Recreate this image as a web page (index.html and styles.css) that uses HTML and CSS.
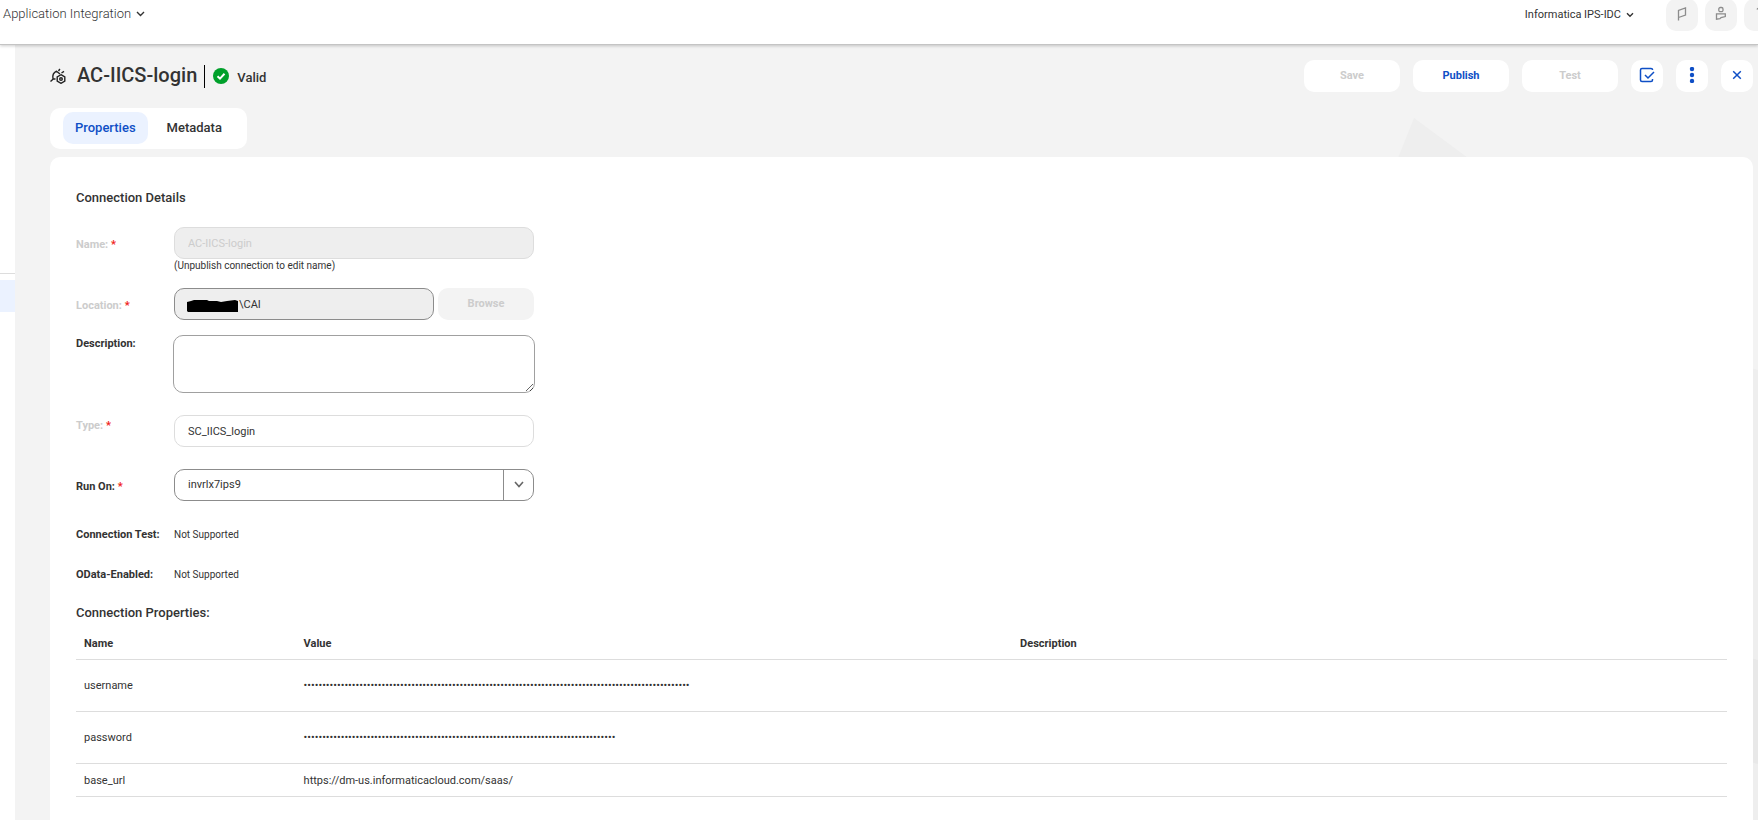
FILE: index.html
```html
<!DOCTYPE html>
<html lang="en">
<head>
    <meta charset="UTF-8">
    <title>AC-IICS-login</title>
    <link rel="stylesheet" href="styles.css">
</head>
<body>
    <header class="top-bar">
        <button class="menu-btn service-menu">Application Integration
            <svg width="9" height="6" viewBox="0 0 9 6"><path d="M1 1l3.500 3.500L8 1"/></svg>
        </button>
        <div class="top-right">
            <button class="menu-btn org-menu">Informatica IPS-IDC
                <svg width="8" height="6" viewBox="0 0 8 6"><path d="M1 1.2l3 3 3-3"/></svg>
            </button>
            <button class="round-btn" aria-label="Notifications">
                <svg width="16" height="16" viewBox="0 0 16 16"><path d="M4.500 14.500v-10l7-2.500v7l-7 2.500"/></svg>
            </button>
            <button class="round-btn" aria-label="User">
                <svg width="16" height="16" viewBox="0 0 16 16"><rect x="5.800" y="1.500" width="4.200" height="4.200" rx="1.500"/><path d="M3.500 7.800h8.800v2.800l-4.300 1-1 1-3.500.6z"/></svg>
            </button>
            <button class="round-btn" aria-label="Help">
                <svg width="16" height="16" viewBox="0 0 16 16"><path d="M5 3.500c1-2 6-2 6 1 0 2-3 2.500-3 5M8 12v1.500"/></svg>
            </button>
        </div>
    </header>

    <div class="layout">
        <nav class="side-nav">
            <div class="nav-active"></div>
        </nav>

        <main class="content">
            <svg class="backdrop" width="344" height="776" viewBox="0 0 344 776">
                <path d="M0 73l-16 40h70z"/>
                <path d="M344 325l-30-8v480h30z"/>
                <path class="dark" d="M344 615l-30-8v104l30 8z"/>
            </svg>

            <div class="title-row">
                <svg class="conn-icon" width="16" height="16" viewBox="0 0 16 16">
                    <path d="M.5 13.500l3-2.700M3 11c-.6-3 .2-6.300 3.500-7.800l3.500 2.800M3 11h2.500M8.500 3l1.400-2M11.500 5l2.500-1.600"/>
                    <path d="M11 6.700l3.800 2.100v4.400L11 15.300l-3.800-2.100V8.800z"/>
                    <circle cx="11" cy="11" r="1.300"/>
                </svg>
                <h1>AC-IICS-login</h1>
                <span class="divider"></span>
                <svg class="valid-icon" width="16" height="16" viewBox="0 0 16 16">
                    <circle cx="8" cy="8" r="8"/>
                    <path d="M4.500 8.200l2.500 2.400 4.500-4.800"/>
                </svg>
                <span class="status">Valid</span>
                <div class="actions">
                    <button class="btn" disabled>Save</button>
                    <button class="btn">Publish</button>
                    <button class="btn" disabled>Test</button>
                    <button class="icon-btn" aria-label="Validation">
                        <svg width="16" height="16" viewBox="0 0 16 16"><path d="M13.500 3V2.500Q13.500 1.500 12 1.500H3Q1.500 1.500 1.500 3v10q0 1.500 1.500 1.500h9q1.500 0 1.500-1.500v-1M6 8l3 3 6-6"/></svg>
                    </button>
                    <button class="icon-btn" aria-label="More actions">
                        <svg class="dots" width="16" height="16" viewBox="0 0 16 16"><circle cx="8" cy="2" r="2.200"/><circle cx="8" cy="8" r="2.200"/><circle cx="8" cy="14" r="2.200"/></svg>
                    </button>
                    <button class="icon-btn" aria-label="Close">
                        <svg width="16" height="16" viewBox="0 0 16 16"><path d="M4.200 4.200l7.600 7.600M11.800 4.200l-7.600 7.600"/></svg>
                    </button>
                </div>
            </div>

            <div class="tabs" role="tablist">
                <button class="tab active" role="tab" aria-selected="true">Properties</button>
                <button class="tab" role="tab" aria-selected="false">Metadata</button>
            </div>

            <section class="card">
                <h2>Connection Details</h2>
                <form class="details">
                    <div class="form-row">
                        <label class="muted" for="name">Name: <span class="req">*</span></label>
                        <div class="field">
                            <input type="text" id="name" value="AC-IICS-login" disabled>
                            <p class="hint">(Unpublish connection to edit name)</p>
                        </div>
                    </div>
                    <div class="form-row">
                        <label class="muted" for="location">Location: <span class="req">*</span></label>
                        <div class="field location">
                            <input type="text" id="location" value="\CAI" readonly>
                            <svg class="redacted" width="51" height="12" viewBox="0 0 51 12"><path d="M0 2l4-1 3-1h13l2 1h8l4 1 6-1 8-1 3 1v11H21l-5 1H2L0 11z"/></svg>
                            <button type="button" class="browse" disabled>Browse</button>
                        </div>
                    </div>
                    <div class="form-row top">
                        <label for="description">Description:</label>
                        <div class="field"><textarea id="description"></textarea></div>
                    </div>
                    <div class="form-row top">
                        <label class="muted type-label" for="type">Type: <span class="req">*</span></label>
                        <div class="field"><input type="text" id="type" class="light" value="SC_IICS_login" readonly></div>
                    </div>
                    <div class="form-row">
                        <label for="runOn">Run On: <span class="req">*</span></label>
                        <div class="field select">
                            <select id="runOn"><option>invrlx7ips9</option></select>
                            <span class="arrow"><svg width="10" height="7" viewBox="0 0 10 7"><path d="M1 1l4 4.500L9 1"/></svg></span>
                        </div>
                    </div>
                    <dl class="status-list">
                        <div class="status-row"><dt>Connection Test:</dt><dd>Not Supported</dd></div>
                        <div class="status-row"><dt>OData-Enabled:</dt><dd>Not Supported</dd></div>
                    </dl>
                </form>

                <h2>Connection Properties:</h2>
                <table class="props">
                    <thead>
                        <tr><th class="col-name">Name</th><th class="col-value">Value</th><th>Description</th></tr>
                    </thead>
                    <tbody>
                        <tr class="secret"><td>username</td><td>••••••••••••••••••••••••••••••••••••••••••••••••••••••••••••••••••••••••••••••••••••••••••••••••••••••••</td><td></td></tr>
                        <tr class="secret"><td>password</td><td>••••••••••••••••••••••••••••••••••••••••••••••••••••••••••••••••••••••••••••••••••••</td><td></td></tr>
                        <tr><td>base_url</td><td>https://dm-us.informaticacloud.com/saas/</td><td></td></tr>
                    </tbody>
                </table>
            </section>
        </main>
    </div>
</body>
</html>
```

FILE: styles.css
```css
* {
    margin: 0;
    padding: 0;
    box-sizing: border-box;
}

body {
    font-family: Roboto, 'Liberation Sans', sans-serif;
    font-size: 11px;
    line-height: 16px;
    color: #333;
    background: #fff;
    display: flex;
    flex-direction: column;
    min-height: 100vh;
}

button, input, select, textarea {
    font: inherit;
    color: inherit;
}

button {
    border: none;
    cursor: pointer;
}

svg {
    fill: none;
    stroke: currentColor;
    flex: none;
}

/* Top bar */
.top-bar {
    display: flex;
    flex: none;
    justify-content: space-between;
    height: 45px;
    padding-left: 3px;
    border-bottom: 1px solid #c4c4c4;
    box-shadow: 0 1px 3px rgba(0, 0, 0, 0.2);
    overflow: hidden;
    position: relative;
    z-index: 1;
}

.menu-btn {
    display: flex;
    align-items: center;
    gap: 5px;
    height: 28px;
    background: none;
}

.menu-btn svg {
    stroke-width: 1.4;
}

.service-menu {
    font-size: 13px;
    font-weight: 300;
}

.top-right {
    display: flex;
    gap: 7px;
    margin-top: -1px;
    margin-right: -18px;
}

.org-menu {
    height: 32px;
    margin-right: 25px;
}

.round-btn {
    width: 32px;
    height: 32px;
    border-radius: 10px;
    background: #f3f3f3;
    color: #8c8c8c;
}

.round-btn svg {
    display: block;
    margin: 0 auto 2px;
    stroke-width: 1.3;
}

/* Layout */
.layout {
    display: flex;
    flex: 1 0 auto;
}

.side-nav {
    width: 15px;
    padding-top: 228px;
}

.nav-active {
    height: 39px;
    border-top: 1px solid #ddd;
    padding-top: 6px;
}

.nav-active::after {
    content: '';
    display: block;
    height: 32px;
    background: #ebf2ff;
}

.content {
    flex: 1;
    display: flex;
    flex-direction: column;
    padding: 15px 5px 0 35px;
    background: #f3f3f3;
    position: relative;
    overflow: hidden;
}

.backdrop {
    position: absolute;
    top: 0;
    right: 0;
    overflow: visible;
    fill: #eee;
    stroke: none;
}

.backdrop .dark {
    fill: #e8e8e8;
}

.title-row, .tabs, .card {
    position: relative;
}

.title-row {
    display: flex;
    align-items: center;
    height: 32px;
}

.conn-icon {
    color: #222;
    stroke-width: 1.4;
}

h1 {
    margin-left: 11px;
    padding-bottom: 2px;
    font-size: 20px;
    line-height: 24px;
    font-weight: 500;
}

.divider {
    width: 1px;
    height: 23px;
    margin: 0 8px 0 7px;
    background: #000;
}

.valid-icon circle {
    fill: #00a02b;
    stroke: none;
}

.valid-icon path {
    stroke: #fff;
    stroke-width: 2;
}

.status {
    margin-left: 8px;
    padding-top: 3px;
    font-size: 13px;
    font-weight: 500;
}

.actions {
    display: flex;
    gap: 13px;
    margin-left: auto;
}

.btn, .icon-btn, .browse {
    height: 32px;
    border-radius: 10px;
    background: #fff;
    color: #0f4fc6;
    font-weight: 700;
}

.btn, .browse {
    width: 96px;
}

.btn:disabled, .browse:disabled {
    color: #ccc;
    cursor: default;
}

.icon-btn {
    display: flex;
    align-items: center;
    justify-content: center;
    width: 32px;
    padding-bottom: 2px;
}

.icon-btn svg {
    stroke-width: 1.5;
}

.icon-btn .dots {
    fill: currentColor;
    stroke: none;
}

/* Tabs */
.tabs {
    align-self: flex-start;
    display: flex;
    gap: 7px;
    margin-top: 16px;
    padding: 4px 13px 5px;
    border-radius: 10px;
    background: #fff;
}

.tab {
    height: 32px;
    padding: 0 12px;
    border-radius: 10px;
    background: none;
    font-size: 13px;
    font-weight: 500;
}

.tab.active {
    background: #ebf2ff;
    color: #0f4fc6;
}

/* Card */
.card {
    flex: 1;
    margin-top: 8px;
    padding: 31px 26px 24px;
    border-radius: 10px 10px 0 0;
    background: #fff;
}

h2 {
    font-size: 13px;
    line-height: 20px;
    font-weight: 500;
}

.details {
    margin: 19px 0 20px;
}

.form-row {
    display: flex;
    margin-bottom: 15px;
}

.form-row label, .status-row dt {
    width: 98px;
    font-weight: 700;
}

.form-row label {
    padding-top: 10px;
}

.form-row.top label {
    padding-top: 1px;
}

.form-row.top .type-label {
    padding-top: 3px;
}

.form-row.top {
    margin-bottom: 22px;
}

.muted {
    color: #ccc;
}

.req {
    color: #f02020;
}

.field {
    width: 360px;
    position: relative;
}

.field input, .field select {
    display: block;
    width: 100%;
    height: 32px;
    padding: 0 13px;
    border: 1px solid #8c8c8c;
    border-radius: 10px;
    background: #fff;
    outline: none;
}

.field input:disabled {
    border-color: #ddd;
    background: #eee;
    color: #ccc;
}

.field input.light {
    border-color: #ddd;
}

.hint {
    font-size: 10px;
    line-height: 14px;
}

.location {
    display: flex;
    gap: 4px;
}

.location input {
    flex: 1;
    padding-left: 64px;
    background: #eee;
}

.redacted {
    position: absolute;
    left: 13px;
    top: 12px;
    fill: #000;
    stroke: none;
}

.browse {
    background: #f3f3f3;
}

.field textarea {
    display: block;
    width: 362px;
    height: 58px;
    margin: 0 -1px;
    padding: 8px 13px;
    border: 1px solid #a0a0a0;
    border-radius: 10px;
    resize: vertical;
}

.field select {
    appearance: none;
}

.arrow {
    position: absolute;
    top: 0;
    right: 0;
    display: flex;
    align-items: center;
    justify-content: center;
    width: 31px;
    height: 32px;
    padding-bottom: 2px;
    border-left: 1px solid #8c8c8c;
    color: #666;
    pointer-events: none;
}

.arrow svg {
    stroke-width: 1.6;
}

.status-list {
    display: flex;
    flex-direction: column;
    gap: 24px;
    margin-top: 26px;
}

.status-row {
    display: flex;
}

.status-row dd {
    font-size: 10px;
}

/* Properties table */
.props {
    width: 100%;
    margin-top: 5px;
    border-collapse: collapse;
    table-layout: fixed;
}

.props th, .props td {
    height: 33px;
    padding: 2px 8px 0;
    border-bottom: 1px solid #ddd;
    text-align: left;
}

.props th {
    height: 31px;
    font-weight: 700;
}

.props .secret td {
    height: 52px;
}

.col-name {
    width: 13.3%;
}

.col-value {
    width: 43.4%;
}
```
